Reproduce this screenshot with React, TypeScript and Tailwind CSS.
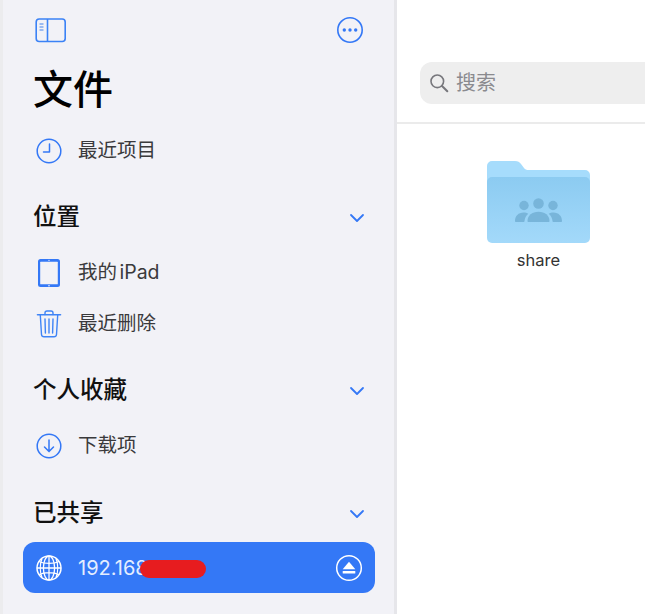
const SidebarIcon = () => (
  <svg width="32" height="26" viewBox="0 0 32 26" fill="none">
    <rect x="1.2" y="2" width="29" height="22.5" rx="3" stroke="#3b82f6" strokeWidth="1.6" />
    <path d="M12.5 2v22.5" stroke="#3b82f6" strokeWidth="1.6" />
    <path d="M4.5 7h4M4.5 10h4M4.5 13h4" stroke="#7fa9f0" strokeWidth="1.5" />
  </svg>
)

const MoreIcon = () => (
  <svg width="28" height="28" viewBox="0 0 28 28" fill="none">
    <circle cx="14" cy="14" r="12.2" stroke="#3478f6" strokeWidth="1.6" />
    <circle cx="8.3" cy="14" r="1.7" fill="#3478f6" />
    <circle cx="14" cy="14" r="1.7" fill="#3478f6" />
    <circle cx="19.7" cy="14" r="1.7" fill="#3478f6" />
  </svg>
)

const ClockIcon = () => (
  <svg width="28" height="28" viewBox="0 0 28 28" fill="none">
    <circle cx="14" cy="14" r="11.8" stroke="#3478f6" strokeWidth="1.5" />
    <path d="M14.5 7v8H8.5" stroke="#3478f6" strokeWidth="1.5" strokeLinecap="round" strokeLinejoin="round" />
  </svg>
)

const TabletIcon = () => (
  <svg width="28" height="30" viewBox="0 0 28 30" fill="none">
    <rect x="3" y="1" width="22" height="28" rx="2.5" fill="#3478f6" />
    <rect x="5.2" y="3.8" width="17.6" height="22.4" rx="0.5" fill="#f2f2f7" />
    <circle cx="14" cy="27.7" r="0.8" fill="#f2f2f7" />
    <circle cx="14" cy="2.4" r="0.6" fill="#f2f2f7" />
  </svg>
)

const TrashIcon = () => (
  <svg width="28" height="30" viewBox="0 0 28 30" fill="none" stroke="#3f84f6" strokeWidth="1.4" strokeLinecap="round">
    <path d="M2.500 5.800h23" strokeWidth="1.6" />
    <path d="M10 5.500V4a2 2 0 0 1 2-2h4a2 2 0 0 1 2 2v1.500" />
    <path d="M5.300 6l1.200 19.500a2.500 2.500 0 0 0 2.500 2.300h10a2.500 2.500 0 0 0 2.500-2.300L22.700 6" />
    <path d="M10 10l.4 14M14 10v14M18 10l-.4 14" />
  </svg>
)

const DownloadIcon = () => (
  <svg width="28" height="28" viewBox="0 0 28 28" fill="none" stroke="#3478f6" strokeWidth="1.5" strokeLinecap="round" strokeLinejoin="round">
    <circle cx="14" cy="14" r="11.800" />
    <path d="M14 8v11.500M9.500 15l4.500 4.600 4.500-4.600" />
  </svg>
)

const GlobeIcon = () => (
  <svg width="28" height="28" viewBox="0 0 28 28" fill="none" stroke="#ffffff" strokeWidth="1.300">
    <circle cx="14" cy="14" r="12" strokeWidth="1.500" />
    <ellipse cx="14" cy="14" rx="5.600" ry="12" />
    <path d="M14 2v24M2 14h24M4 7.500c5.500 2.600 14.500 2.600 20 0M4 20.500c5.500-2.600 14.500-2.600 20 0M7 4.500C4.800 10 4.800 18 7 23.500M21 4.500c2.200 5.500 2.200 13.500 0 19" />
  </svg>
)

const EjectIcon = () => (
  <svg width="28" height="28" viewBox="0 0 28 28" fill="none">
    <circle cx="14" cy="14" r="12.300" stroke="#ffffff" strokeWidth="1.500" />
    <path d="M14 7.800l6.300 7.400H7.700z" fill="#ffffff" strokeLinejoin="round" />
    <rect x="7.700" y="17" width="12.600" height="2.600" rx="0.500" fill="#ffffff" />
  </svg>
)

const Chevron = () => (
  <svg width="16" height="10" viewBox="0 0 16 10" fill="none" className="mt-[2px]">
    <path d="M2 2l6 6 6-6" stroke="#3478f6" strokeWidth="1.800" strokeLinecap="round" strokeLinejoin="round" />
  </svg>
)

const SearchIcon = () => (
  <svg width="20" height="20" viewBox="0 0 20 20" fill="none" stroke="#77777c" strokeWidth="1.600" strokeLinecap="round">
    <circle cx="8.300" cy="8.300" r="6.300" />
    <path d="M13 13l5.300 5.300" strokeWidth="2" />
  </svg>
)

const FolderIcon = () => (
  <svg width="103" height="82" viewBox="0 0 103 82" fill="none">
    <defs>
      <linearGradient id="folderFront" x1="0" y1="0" x2="0" y2="1">
        <stop offset="0" stopColor="#8ccbf1" />
        <stop offset="1" stopColor="#a3d9fa" />
      </linearGradient>
    </defs>
    <path d="M0 5a5 5 0 0 1 5-5h23c3 0 4.500 1 6 3l3 4c1.200 1.500 2.500 2 4.500 2H98a5 5 0 0 1 5 5v20H0z" fill="#a6dcfc" />
    <path d="M0 21a5 5 0 0 1 5-5h93a5 5 0 0 1 5 5v56a5 5 0 0 1-5 5H5a5 5 0 0 1-5-5z" fill="url(#folderFront)" />
    <g fill="#78b5da">
      <circle cx="37" cy="44.500" r="4.700" />
      <circle cx="51.500" cy="42.500" r="5.300" />
      <circle cx="66" cy="44.500" r="4.700" />
      <path d="M28 60c0-5 3.500-8.500 8.500-8.500 2 0 3.500.4 4.800 1.200-2.300 2-3.500 4.500-3.800 7.300 0 .6-.4 1-1 1h-7.500c-.6 0-1-.4-1-1z" />
      <path d="M75 60c0-5-3.500-8.500-8.500-8.500-2 0-3.500.4-4.800 1.200 2.300 2 3.500 4.500 3.800 7.300 0 .6.400 1 1 1h7.500c.6 0 1-.4 1-1z" />
      <path d="M40.500 60c0-5.500 4.500-9.300 11-9.300s11 3.800 11 9.300c0 .6-.4 1-1 1h-20c-.6 0-1-.4-1-1z" />
    </g>
  </svg>
)

const Row = ({ icon, label }: { icon: React.ReactNode; label: string }) => (
  <div className="flex h-[51px] items-center pl-[32px]">
    <div className="flex w-[43px] shrink-0">{icon}</div>
    <span className="pt-[1px] text-[19.5px] text-[#3a3a3c] [word-spacing:-3px]">{label}</span>
  </div>
)

const Heading = ({ title, className }: { title: string; className: string }) => (
  <div className={"flex h-[52px] items-center justify-between pl-[30px] pr-[29px] " + className}>
    <span className="text-[23.5px] font-medium text-[#111111]">{title}</span>
    <Chevron />
  </div>
)

export default function App() {
  return (
    <div className="flex h-[614px] w-[645px] overflow-hidden bg-white font-['Inter','Noto_Sans_CJK_SC',sans-serif]">
      <aside className="flex w-[397px] shrink-0 flex-col border-l-[3px] border-r-[3px] border-l-[#ececee] border-r-[#e6e6ea] bg-[#f2f2f7]">
        <div className="flex items-center justify-between pl-[32px] pr-[30px] pt-[16px]">
          <SidebarIcon />
          <MoreIcon />
        </div>
        <h1 className="mt-[21px] h-[50px] pl-[30px] text-[40px] font-medium leading-[50px] text-black">文件</h1>
        <div className="mt-[10px]">
          <Row icon={<ClockIcon />} label="最近项目" />
        </div>
        <Heading title="位置" className="mt-[15px]" />
        <div className="mt-[4px]">
          <Row icon={<TabletIcon />} label="我的 iPad" />
          <Row icon={<TrashIcon />} label="最近删除" />
        </div>
        <Heading title="个人收藏" className="mt-[15px]" />
        <div className="mt-[4px]">
          <Row icon={<DownloadIcon />} label="下载项" />
        </div>
        <Heading title="已共享" className="mt-[16px]" />
        <div className="relative ml-[20px] mr-[19px] mt-[3px] flex h-[51px] items-center rounded-xl bg-[#3478f6] pl-[12px] pr-[12px]">
          <div className="flex w-[43px] shrink-0">
            <GlobeIcon />
          </div>
          <span className="flex-1 pt-[1px] text-[20px] text-[#e4edff]">192.168</span>
          <EjectIcon />
          <div className="absolute left-[117px] top-[18px] h-[18px] w-[66px] rounded-full bg-[#e71c1f]" />
        </div>
      </aside>
      <main className="min-w-0 flex-1">
        <div className="h-[124px] border-b-2 border-[#ebebeb] pl-[23px] pt-[62px]">
          <div className="flex h-[42px] w-[300px] items-center gap-[7px] rounded-xl bg-[#eeeeee] pl-[9px]">
            <SearchIcon />
            <span className="text-[20px] text-[#8a8a8e]">搜索</span>
          </div>
        </div>
        <div className="ml-[90px] flex w-[103px] flex-col items-center pt-[37px]">
          <FolderIcon />
          <span className="mt-[7px] text-[16.5px] leading-5 text-[#333333]">share</span>
        </div>
      </main>
    </div>
  )
}
